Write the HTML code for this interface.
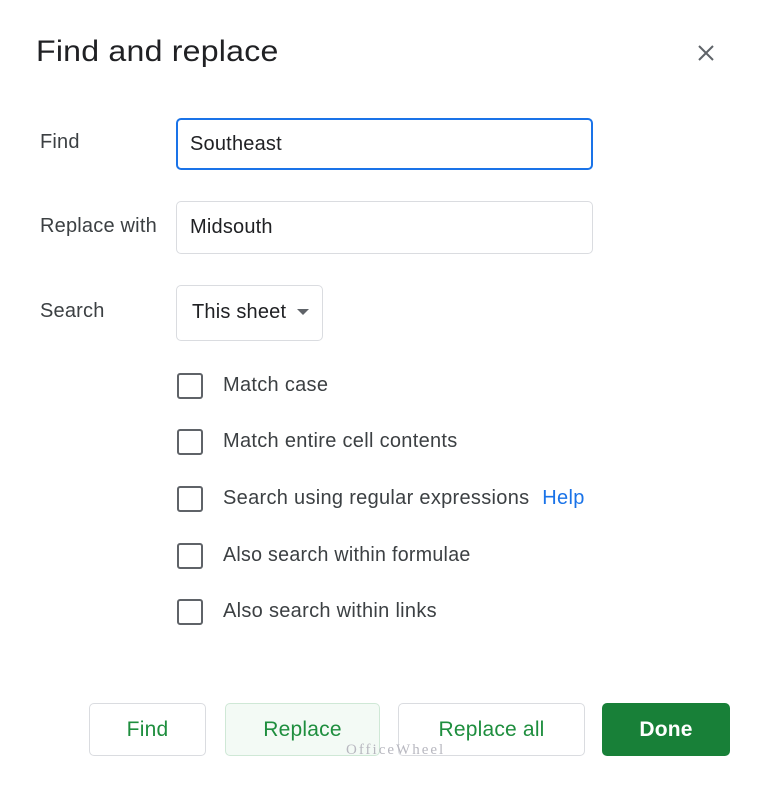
<!DOCTYPE html>
<html><head><style>
body{margin:0;width:767px;height:794px;background:#fff;font-family:"Liberation Sans",Arial,sans-serif;position:relative;overflow:hidden}
.a{position:absolute}
h1{position:absolute;left:36px;top:35px;margin:0;font-weight:400;font-size:30px;color:#202124;transform:scaleX(1.07);transform-origin:0 0;letter-spacing:0.2px}
.lbl{position:absolute;left:40px;font-size:20px;color:#3c4043;letter-spacing:0.2px}
.in{position:absolute;left:176px;width:417px;border:1px solid #dadce0;border-radius:5px;box-sizing:border-box;font-size:20px;color:#202124;padding-left:13px;letter-spacing:0.2px}
.cb{position:absolute;left:177px;width:26px;height:26px;border:2.5px solid #5f6368;border-radius:3px;box-sizing:border-box}
.ct{position:absolute;left:223px;font-size:20px;color:#3c4043;letter-spacing:0.3px}
.btn{position:absolute;top:703px;height:53px;border:1px solid #dadce0;border-radius:5px;box-sizing:border-box;font-size:21px;color:#1e8e3e;text-align:center;line-height:51px;background:#fff;letter-spacing:0.2px}
</style></head><body>
<h1>Find and replace</h1>
<svg class="a" style="left:697px;top:44px" width="18" height="18" viewBox="0 0 18 18"><path d="M2 2L16 16M16 2L2 16" stroke="#5f6368" stroke-width="2"/></svg>
<div class="lbl" style="top:131px">Find</div>
<div class="in" style="top:118px;height:52px;line-height:48px;border:2px solid #1a73e8;padding-left:12px">Southeast</div>
<div class="lbl" style="top:215px">Replace with</div>
<div class="in" style="top:201px;height:53px;line-height:51px">Midsouth</div>
<div class="lbl" style="top:300px">Search</div>
<div class="in" style="top:285px;width:147px;height:56px;line-height:52px;padding-left:15px">This sheet</div>
<svg class="a" style="left:297px;top:309px" width="12" height="6"><path d="M0 0L12 0L6 6Z" fill="#5f6368"/></svg>
<div class="cb" style="top:373px"></div><div class="ct" style="top:374px">Match case</div>
<div class="cb" style="top:429px"></div><div class="ct" style="top:430px">Match entire cell contents</div>
<div class="cb" style="top:486px"></div><div class="ct" style="top:487px">Search using regular expressions <span style="color:#1a73e8;margin-left:7px">Help</span></div>
<div class="cb" style="top:543px"></div><div class="ct" style="top:544px;transform:scaleX(0.98);transform-origin:0 0">Also search within formulae</div>
<div class="cb" style="top:599px"></div><div class="ct" style="top:600px">Also search within links</div>
<div class="btn" style="left:89px;width:117px">Find</div>
<div class="btn" style="left:225px;width:155px;background:#f3faf5;border-color:#cfe8d6">Replace</div>
<div class="btn" style="left:398px;width:187px">Replace all</div>
<div class="btn" style="left:602px;width:128px;background:#188038;border-color:#188038;color:#fff;font-weight:700">Done</div>
<div class="a" style="left:346px;top:742px;font-family:'Liberation Serif',serif;font-size:15px;color:#b8b8c0;letter-spacing:2px">OfficeWheel</div>
</body></html>
